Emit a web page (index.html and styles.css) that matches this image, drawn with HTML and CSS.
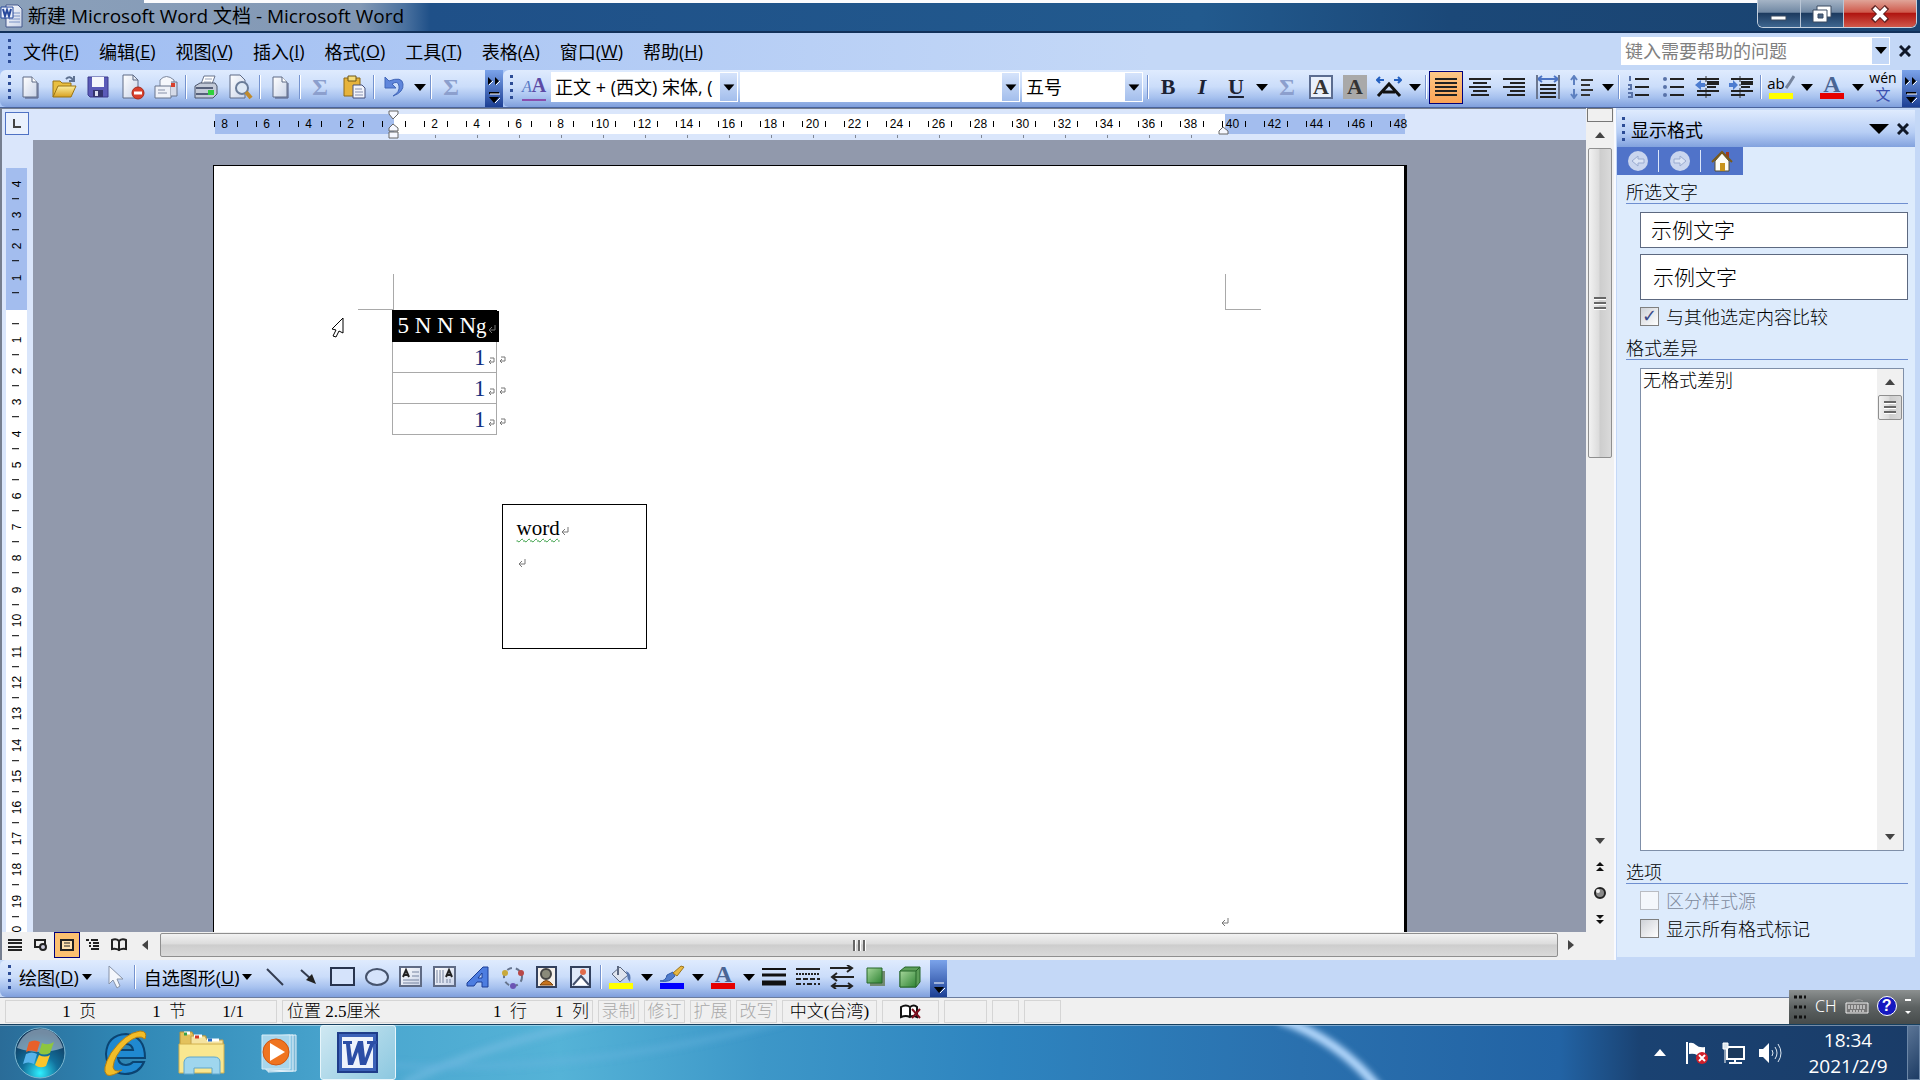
FILE: index.html
```html
<!DOCTYPE html>
<html lang="zh-CN">
<head>
    <meta charset="UTF-8">
    <meta name="viewport" content="width=device-width, initial-scale=1.0">
    <title>新建 Microsoft Word 文档 - Microsoft Word</title>
    <link rel="stylesheet" href="styles.css">
</head>
<body>
    <!-- shared icons -->
    <svg class="defs" aria-hidden="true">
        <defs>
            <linearGradient id="paper" x1="0" y1="0" x2="1" y2="1"><stop offset="0" stop-color="#ffffff"/><stop offset="1" stop-color="#c9d3e8"/></linearGradient>
            <linearGradient id="green" x1="0" y1="0" x2="1" y2="1"><stop offset="0" stop-color="#a5d69a"/><stop offset="1" stop-color="#2f8434"/></linearGradient>
            <linearGradient id="gold" x1="0" y1="0" x2="0" y2="1"><stop offset="0" stop-color="#fdf0a0"/><stop offset="1" stop-color="#d8a020"/></linearGradient>
            <symbol id="down" viewBox="0 0 12 7"><path d="M0 0h12L6 7z" fill="#000"/></symbol>
            <symbol id="page" viewBox="0 0 24 24"><path d="M5 2h9l5 5v15H5z" fill="url(#paper)" stroke="#5f6b85"/><path d="M14 2v5h5" fill="#fff" stroke="#5f6b85"/><path d="M20 8v15H7" fill="none" stroke="#50597a"/></symbol>
            <symbol id="ret" viewBox="0 0 8 8"><path d="M7 0v5H2M4 2L1 5l3 3" fill="none" stroke="currentColor"/></symbol>
            <symbol id="cellmark" viewBox="0 0 8 8"><path d="M3 1h4v4H2M4 3L2 5l2 2" fill="none" stroke="currentColor"/></symbol>
            <symbol id="more" viewBox="0 0 18 38"><path d="M3 7l4 4-4 4zM10 7l4 4-4 4z" fill="#000"/><path d="M4 15l4-4M11 15l4-4" stroke="#fff"/><path d="M4 23h10" stroke="#000" stroke-width="2"/><path d="M5 24h10" stroke="#fff"/><path d="M4 27h10l-5 6z" fill="#000"/><path d="M10 33l5-5" stroke="#fff"/></symbol>
            <symbol id="x" viewBox="0 0 12 12"><path d="M1 1l10 10M11 1L1 11" stroke="#101828" stroke-width="3"/></symbol>
        </defs>
    </svg>

    <header class="titlebar">
        <svg class="app-icon" viewBox="0 0 24 24"><path d="M6 1h12l4 4v18H6z" fill="url(#paper)" stroke="#44598c"/><path d="M12 9h8M12 12h8M9 15h11M9 18h11" stroke="#7b92c4"/><path d="M1 3h12v11H1z" fill="#e9effb" stroke="#27489b"/><path d="M3 5l2 7 2-6 2 6 2-7" fill="none" stroke="#27489b" stroke-width="2"/></svg>
        <h1 class="title">新建 Microsoft Word 文档 - Microsoft Word</h1>
        <div class="window-buttons">
            <button class="win" aria-label="最小化"><svg width="18" height="16"><path d="M1 10h15v4H1z" fill="#fff" stroke="#3b4a60"/></svg></button>
            <button class="win" aria-label="还原"><svg width="20" height="18"><path d="M5 1h14v11H5z" fill="#fff" stroke="#3b4a60"/><path d="M1 5h14v12H1z" fill="#fff" stroke="#3b4a60"/><path d="M6 9h5v4H6z" fill="#4c6584" stroke="#3b4a60"/></svg></button>
            <button class="win close" aria-label="关闭"><svg width="20" height="18"><path d="M3 2l14 14M17 2L3 16" stroke="#5a2020" stroke-width="6"/><path d="M4 3l12 12M16 3L4 15" stroke="#fff" stroke-width="4"/></svg></button>
        </div>
    </header>

    <nav class="menubar">
        <span class="grip"></span>
        <button class="menu">文件(<u>F</u>)</button>
        <button class="menu">编辑(<u>E</u>)</button>
        <button class="menu">视图(<u>V</u>)</button>
        <button class="menu">插入(<u>I</u>)</button>
        <button class="menu">格式(<u>O</u>)</button>
        <button class="menu">工具(<u>T</u>)</button>
        <button class="menu">表格(<u>A</u>)</button>
        <button class="menu">窗口(<u>W</u>)</button>
        <button class="menu">帮助(<u>H</u>)</button>
        <div class="ask">
            <input type="text" class="ask-input" aria-label="帮助" placeholder="键入需要帮助的问题">
            <button class="ask-arrow" aria-label="展开"><svg width="12" height="7"><use href="#down"/></svg></button>
        </div>
        <button class="doc-close" aria-label="关闭窗口"><svg width="12" height="12"><use href="#x"/></svg></button>
    </nav>

    <div class="toolbars">
        <div class="toolbar standard">
            <span class="grip"></span>
            <button class="tool" aria-label="新建"><svg width="24" height="26"><use href="#page"/></svg></button>
            <button class="tool" aria-label="打开"><svg width="26" height="26" viewBox="0 0 26 26"><path d="M2 23V7h7l2 2h9v4" fill="#e9bf3f" stroke="#9a7414"/><path d="M2 23l5-11h18l-5 11z" fill="url(#gold)" stroke="#9a7414"/><path d="M15 5q4-4 7 1M23 2v5h-5" fill="none" stroke="#5e7190" stroke-width="2"/></svg></button>
            <button class="tool" aria-label="保存"><svg width="24" height="24"><path d="M2 2h20v20H4l-2-2z" fill="#5b5bb8" stroke="#3a3a8c"/><path d="M6 2h12v10H6z" fill="#f4f6fc"/><path d="M7 15h10v7H7z" fill="#35356e"/><path d="M9 16h3v5H9z" fill="#dfe3f2"/></svg></button>
            <button class="tool" aria-label="权限"><svg width="26" height="26"><path d="M4 1h10l5 5v18H4z" fill="url(#paper)" stroke="#5f6b85"/><path d="M14 1v5h5" fill="none" stroke="#5f6b85"/><circle cx="19" cy="19" r="6" fill="#d8402c" stroke="#a82a1a"/><path d="M15 19h8" stroke="#fff" stroke-width="3"/></svg></button>
            <button class="tool" aria-label="电子邮件"><svg width="26" height="26"><path d="M7 12V6q6-7 14 0v10" fill="#f5f7fc" stroke="#7b869c"/><path d="M2 12h16v12H2z" fill="#eef1f8" stroke="#69748c"/><path d="M18 8h6v14h-6" fill="#d5dbe8" stroke="#69748c"/><path d="M5 16h7M5 19h9" stroke="#8690a8"/><path d="M18 9h4v4h-4z" fill="#d8402c"/></svg></button>
            <span class="sep"></span>
            <button class="tool" aria-label="打印"><svg width="26" height="26"><path d="M8 10l3-8h11l-3 8z" fill="#fff" stroke="#69748c"/><path d="M12 5h7M11 8h7" stroke="#9aa5bb"/><path d="M2 12l5-3h15l2 3v8l-4 4H2z" fill="#c3cad8" stroke="#4b556b"/><path d="M3 14h17M3 20h17" stroke="#56607a" stroke-width="2"/><path d="M15 16h6v5h-6z" fill="#2fd03c"/></svg></button>
            <button class="tool" aria-label="打印预览"><svg width="26" height="26"><path d="M3 1h10l5 5v18H3z" fill="url(#paper)" stroke="#5f6b85"/><circle cx="15" cy="14" r="6" fill="#dfe9f5" stroke="#6a7c98" stroke-width="2"/><path d="M19 18l5 6" stroke="#c08a2c" stroke-width="4"/></svg></button>
            <span class="sep"></span>
            <button class="tool" aria-label="空白文档"><svg width="24" height="26"><use href="#page"/></svg></button>
            <span class="sep"></span>
            <button class="tool sigma" aria-label="求和" disabled>Σ</button>
            <button class="tool" aria-label="粘贴"><svg width="26" height="26"><path d="M3 4h16v18H3z" fill="#e6b33c" stroke="#8c6817"/><path d="M7 2h8v5H7z" fill="#f5dc78" stroke="#6c5518"/><path d="M12 11h9l3 3v10H12z" fill="#f2f4fb" stroke="#47507a"/><path d="M14 15h7M14 18h8M14 21h8" stroke="#8690b0"/></svg></button>
            <span class="sep"></span>
            <button class="tool" aria-label="撤消"><svg width="24" height="24"><path d="M3 2v11h11l-4-4q6-4 7 2t-6 10q11-4 10-12T7 6z" fill="#5f86dc" stroke="#4166b8"/></svg></button>
            <button class="drop" aria-label="撤消列表"><svg width="12" height="7"><use href="#down"/></svg></button>
            <span class="sep"></span>
            <button class="tool sigma" aria-label="公式" disabled>Σ</button>
            <button class="more" aria-label="工具栏选项"><svg width="18" height="38"><use href="#more"/></svg></button>
        </div>
        <div class="toolbar formatting">
            <span class="grip"></span>
            <button class="tool" aria-label="样式和格式"><span class="aa"><i>A</i><b>A</b></span></button>
            <div class="combo style-combo">
                <select aria-label="样式"><option>正文 + (西文) 宋体, (</option></select>
                <svg class="combo-arrow" viewBox="0 0 17 30"><use href="#down" x="3" y="12" width="12" height="7"/></svg>
            </div>
            <div class="combo font-combo">
                <select aria-label="字体"><option></option></select>
                <svg class="combo-arrow" viewBox="0 0 17 30"><use href="#down" x="3" y="12" width="12" height="7"/></svg>
            </div>
            <div class="combo size-combo">
                <select aria-label="字号"><option>五号</option></select>
                <svg class="combo-arrow" viewBox="0 0 17 30"><use href="#down" x="3" y="12" width="12" height="7"/></svg>
            </div>
            <span class="sep"></span>
            <button class="tool letter"><b>B</b></button>
            <button class="tool letter"><i>I</i></button>
            <button class="tool letter"><u>U</u></button>
            <button class="drop" aria-label="下划线列表"><svg width="12" height="7"><use href="#down"/></svg></button>
            <button class="tool sigma" aria-label="公式" disabled>Σ</button>
            <button class="tool"><span class="letter-box">A</span></button>
            <button class="tool"><span class="letter-box shade">A</span></button>
            <button class="tool" aria-label="字符缩放"><svg width="26" height="24"><path d="M1 5h7M4 2L1 5l3 3M18 5h7M22 2l3 3-3 3" fill="none" stroke="#2460c0" stroke-width="2"/><path d="M2 21l11-12 11 12M7 17h12" fill="none" stroke="#111" stroke-width="3"/></svg></button>
            <button class="drop" aria-label="缩放列表"><svg width="12" height="7"><use href="#down"/></svg></button>
            <span class="sep"></span>
            <button class="tool pressed" aria-label="两端对齐"><svg width="22" height="20"><path d="M0 2h22M0 6h22M0 10h22M0 14h22M0 18h22" stroke="#222" stroke-width="2"/></svg></button>
            <button class="tool" aria-label="居中"><svg width="22" height="20"><path d="M0 2h22M4 6h14M0 10h22M4 14h14M2 18h18" stroke="#222" stroke-width="2"/></svg></button>
            <button class="tool" aria-label="右对齐"><svg width="22" height="20"><path d="M0 2h22M7 6h15M0 10h22M7 14h15M4 18h18" stroke="#222" stroke-width="2"/></svg></button>
            <button class="tool" aria-label="分散对齐"><svg width="24" height="24"><path d="M2 4h20M6 1L2 4l4 3M18 1l4 3-4 3" fill="none" stroke="#4c74c4" stroke-width="2"/><path d="M1 0v24M23 0v24" stroke="#6b7790" stroke-width="2"/><path d="M4 10h16M4 14h16M4 18h16M4 22h16" stroke="#222" stroke-width="2"/></svg></button>
            <button class="tool" aria-label="行距"><svg width="24" height="24"><path d="M4 1v9M1 5l3-4 3 4M4 14v9M1 19l3 4 3-4" fill="none" stroke="#5d80c0" stroke-width="2"/><path d="M11 5h12M11 10h9M11 15h12M11 20h9" stroke="#333" stroke-width="2"/></svg></button>
            <button class="drop" aria-label="行距列表"><svg width="12" height="7"><use href="#down"/></svg></button>
            <span class="sep"></span>
            <button class="tool" aria-label="编号"><svg width="24" height="22"><path d="M3 0v5M1 9h3v4M1 13h4M1 17h4v4H1" fill="none" stroke="#5872a8" stroke-width="2"/><path d="M8 3h14M8 11h14M8 19h14" stroke="#222" stroke-width="2"/></svg></button>
            <button class="tool" aria-label="项目符号"><svg width="24" height="22"><g fill="#5872a8"><circle cx="4" cy="3" r="2"/><circle cx="4" cy="11" r="2"/><circle cx="4" cy="19" r="2"/></g><path d="M9 3h14M9 11h14M9 19h14" stroke="#222" stroke-width="2"/></svg></button>
            <button class="tool" aria-label="减少缩进"><svg width="24" height="22"><path d="M2 3h22M12 7h12M12 11h9M2 15h22M2 19h14" stroke="#222" stroke-width="2"/><path d="M12 5h12v4H12z" fill="#222"/><path d="M0 9l6-5v3h4v4H6v3z" fill="#4c7cd0"/><path d="M11 0v22" stroke="#333" stroke-dasharray="2 2"/></svg></button>
            <button class="tool" aria-label="增加缩进"><svg width="24" height="22"><path d="M2 3h22M12 11h9M2 15h22M2 19h14" stroke="#222" stroke-width="2"/><path d="M12 5h12v4H12z" fill="#222"/><path d="M9 9L4 4v3H0v4h4v3z" fill="#4c7cd0"/><path d="M11 0v22" stroke="#333" stroke-dasharray="2 2"/></svg></button>
            <span class="sep"></span>
            <button class="tool color-tool" aria-label="突出显示"><span class="ab">ab<svg width="10" height="14"><path d="M9 1L4 9l-3 4" stroke="#75839c" stroke-width="3"/></svg></span><span class="swatch yellow"></span></button>
            <button class="drop" aria-label="突出显示列表"><svg width="12" height="7"><use href="#down"/></svg></button>
            <button class="tool color-tool" aria-label="字体颜色"><span class="color-letter">A</span><span class="swatch red"></span></button>
            <button class="drop" aria-label="字体颜色列表"><svg width="12" height="7"><use href="#down"/></svg></button>
            <button class="tool color-tool" aria-label="拼音指南"><span class="pinyin">wén</span><span class="hanzi">文</span></button>
            <button class="more" aria-label="工具栏选项"><svg width="18" height="38"><use href="#more"/></svg></button>
        </div>
    </div>

    <main class="main">
        <section class="document">
            <div class="hruler">
                <div class="corner"><span class="tab-box"><svg width="8" height="9"><path d="M1 0v8h7" fill="none" stroke="#444" stroke-width="2"/></svg></span></div>
                <div class="hscale">
                    <div class="hcells">
                        <span>8</span><span>6</span><span>4</span><span>2</span><span></span><span>2</span><span>4</span><span>6</span><span>8</span><span>10</span><span>12</span><span>14</span><span>16</span><span>18</span><span>20</span><span>22</span><span>24</span><span>26</span><span>28</span><span>30</span><span>32</span><span>34</span><span>36</span><span>38</span><span>40</span><span>42</span><span>44</span><span>46</span><span>48</span>
                    </div>
                    <svg class="indent left" width="12" height="29"><g fill="#f6f8ff" stroke="#666"><path d="M1 1h9v3L5 9 1 4z"/><path d="M1 21v-3l4-4 5 4v3z"/><path d="M1 22h9v6H1z"/></g></svg>
                    <svg class="indent right" width="12" height="9"><path d="M1 8V5l4-4 5 4v3z" fill="#f6f8ff" stroke="#666"/></svg>
                </div>
            </div>
            <div class="work">
                <div class="vruler">
                    <div class="vcells">
                        <span>4</span><span>3</span><span>2</span><span>1</span><span></span><span>1</span><span>2</span><span>3</span><span>4</span><span>5</span><span>6</span><span>7</span><span>8</span><span>9</span><span>10</span><span>11</span><span>12</span><span>13</span><span>14</span><span>15</span><span>16</span><span>17</span><span>18</span><span>19</span><span>20</span>
                    </div>
                </div>
                <div class="desk">
                    <article class="sheet">
                        <div class="margins"><span class="crop crop-left"></span><span class="crop crop-right"></span></div>
                        <table class="doc-table">
                            <tr class="selected"><td>5 N N N<small>g</small><svg class="mark" width="8" height="8"><use href="#ret"/></svg></td><td></td></tr>
                            <tr><td>1<svg class="mark" width="8" height="8"><use href="#cellmark"/></svg></td><td class="row-end"><svg class="mark" width="8" height="8"><use href="#cellmark"/></svg></td></tr>
                            <tr><td>1<svg class="mark" width="8" height="8"><use href="#cellmark"/></svg></td><td class="row-end"><svg class="mark" width="8" height="8"><use href="#cellmark"/></svg></td></tr>
                            <tr><td>1<svg class="mark" width="8" height="8"><use href="#cellmark"/></svg></td><td class="row-end"><svg class="mark" width="8" height="8"><use href="#cellmark"/></svg></td></tr>
                        </table>
                        <div class="textbox">
                            <p><span class="grammar">word</span><svg class="mark" width="8" height="8"><use href="#ret"/></svg></p>
                            <p><svg class="mark" width="8" height="8"><use href="#ret"/></svg></p>
                        </div>
                        <svg class="mark end-mark" width="8" height="8"><use href="#ret"/></svg>
                        <svg class="pointer" width="14" height="22"><path d="M12 1L1 12l4 1-3 6 3 1 3-6 4 2z" fill="#fff" stroke="#000"/></svg>
                    </article>
                </div>
            </div>
            <div class="hscroll">
                <button class="view" aria-label="普通视图"><svg width="14" height="12"><path d="M0 1h14M0 4h14M0 8h14M0 11h14" stroke="#222" stroke-width="2"/></svg></button>
                <button class="view" aria-label="Web 版式"><svg width="14" height="12"><path d="M1 1h10v7H1z" fill="none" stroke="#222" stroke-width="2"/><circle cx="9" cy="8" r="3" fill="#ccd" stroke="#222" stroke-width="2"/></svg></button>
                <button class="view pressed" aria-label="页面视图"><svg width="14" height="12"><path d="M1 1h12v10H1z" fill="#ffe2b0" stroke="#222" stroke-width="2"/><path d="M4 4h6M4 7h6" stroke="#222"/></svg></button>
                <button class="view" aria-label="大纲视图"><svg width="14" height="12"><path d="M0 1h3M5 1h7M3 4h2M7 4h6M3 7h2M7 7h6M5 10h8" stroke="#222" stroke-width="2"/></svg></button>
                <button class="view" aria-label="阅读版式"><svg width="16" height="14"><path d="M1 2q4-2 7 1 3-3 7-1v9q-4-1-7 1-3-2-7-1zM8 3v10" fill="none" stroke="#222" stroke-width="2"/></svg></button>
                <button class="scroll-btn" aria-label="向左"><svg width="6" height="10"><path d="M6 0v10L0 5z" fill="#444"/></svg></button>
                <div class="hthumb"><span></span><span></span><span></span></div>
                <button class="scroll-btn" aria-label="向右"><svg width="6" height="10"><path d="M0 0v10l6-5z" fill="#444"/></svg></button>
            </div>
        </section>

        <div class="vscroll">
            <span class="splitter"></span>
            <button class="scroll-btn" aria-label="向上"><svg width="10" height="6"><path d="M0 6h10L5 0z" fill="#444"/></svg></button>
            <div class="vthumb"><span></span><span></span><span></span></div>
            <div class="track"></div>
            <button class="scroll-btn" aria-label="向下"><svg width="10" height="6"><path d="M0 0h10L5 6z" fill="#444"/></svg></button>
            <button class="scroll-btn" aria-label="前一页"><svg width="8" height="10"><path d="M0 4h8L4 0zM0 9h8L4 5z" fill="#111"/></svg></button>
            <button class="scroll-btn" aria-label="选择浏览对象"><svg width="12" height="12"><circle cx="6" cy="6" r="5" fill="#888" stroke="#222" stroke-width="2"/><circle cx="4" cy="4" r="2" fill="#eee"/></svg></button>
            <button class="scroll-btn" aria-label="下一页"><svg width="8" height="10"><path d="M0 1h8L4 5zM0 6h8l-4 4z" fill="#111"/></svg></button>
        </div>

        <aside class="pane">
            <div class="pane-head">
                <span class="grip"></span>
                <h2 class="pane-title">显示格式</h2>
                <button class="pane-btn" aria-label="其他任务窗格"><svg width="20" height="10" viewBox="0 0 20 10"><path d="M0 0h20L10 10z"/></svg></button>
                <button class="pane-btn" aria-label="关闭窗格"><svg width="12" height="12"><use href="#x"/></svg></button>
            </div>
            <div class="pane-nav">
                <button class="nav" aria-label="返回"><svg width="22" height="22"><circle cx="11" cy="11" r="10" fill="#c9d5ee"/><path d="M5 11l6-5v3h6v4h-6v3z" fill="#dbe4f5" stroke="#9aabd0"/></svg></button>
                <button class="nav" aria-label="前进"><svg width="22" height="22"><circle cx="11" cy="11" r="10" fill="#c9d5ee"/><path d="M17 11l-6-5v3H5v4h6v3z" fill="#dbe4f5" stroke="#9aabd0"/></svg></button>
                <button class="nav" aria-label="主页"><svg width="22" height="22"><path d="M15 2h3v6h-3z" fill="#a03a20"/><path d="M4 11l7-8 7 8v10H4z" fill="#fdfdf6" stroke="#5a5030"/><path d="M1 12L11 2l10 10" fill="none" stroke="#7a5a18" stroke-width="2"/><path d="M9 13h5v8H9z" fill="#c8941c"/></svg></button>
            </div>
            <div class="pane-body">
                <h3 class="pane-label">所选文字</h3>
                <button class="sample">示例文字</button>
                <button class="sample second">示例文字</button>
                <div class="check">
                    <input type="checkbox" id="compare" checked>
                    <label for="compare">与其他选定内容比较</label>
                </div>
                <h3 class="pane-label">格式差异</h3>
                <div class="diff">
                    <p class="diff-text">无格式差别</p>
                    <div class="diff-scroll">
                        <button class="scroll-btn" aria-label="向上"><svg width="10" height="6"><path d="M0 6h10L5 0z" fill="#444"/></svg></button>
                        <div class="vthumb small"><span></span><span></span><span></span></div>
                        <div class="track"></div>
                        <button class="scroll-btn" aria-label="向下"><svg width="10" height="6"><path d="M0 0h10L5 6z" fill="#444"/></svg></button>
                    </div>
                </div>
                <h3 class="pane-label">选项</h3>
                <div class="check disabled">
                    <input type="checkbox" id="source" disabled>
                    <label for="source">区分样式源</label>
                </div>
                <div class="check">
                    <input type="checkbox" id="marks">
                    <label for="marks">显示所有格式标记</label>
                </div>
            </div>
        </aside>
    </main>

    <div class="drawbar">
        <div class="toolbar drawing">
            <span class="grip"></span>
            <button class="text-tool">绘图(<u>D</u>)<svg width="10" height="6"><use href="#down"/></svg></button>
            <button class="tool" aria-label="选择对象"><svg width="18" height="24"><path d="M3 1v18l4-4 4 8 3-2-3-7h6z" fill="#f4f7fc" stroke="#8793a8"/></svg></button>
            <span class="sep"></span>
            <button class="text-tool">自选图形(<u>U</u>)<svg width="10" height="6"><use href="#down"/></svg></button>
            <button class="tool" aria-label="直线"><svg width="20" height="20"><path d="M2 2l16 16" stroke="#333c50" stroke-width="2"/></svg></button>
            <button class="tool" aria-label="箭头"><svg width="20" height="20"><path d="M2 3l10 9" stroke="#333c50" stroke-width="2"/><path d="M17 17L7 13l6-6z" fill="#222"/></svg></button>
            <button class="tool" aria-label="矩形"><svg width="26" height="20"><path d="M1 1h23v17H1z" fill="#d5e3fb" stroke="#28344e" stroke-width="2"/></svg></button>
            <button class="tool" aria-label="椭圆"><svg width="26" height="20"><ellipse cx="13" cy="10" rx="11" ry="8" fill="#d5e3fb" stroke="#46536c" stroke-width="2"/></svg></button>
            <button class="tool" aria-label="文本框"><svg width="24" height="22"><path d="M1 1h21v19H1z" fill="url(#paper)" stroke="#5f6b85" stroke-width="2"/><path d="M4 11l3-7 3 7M5 9h4" fill="none" stroke="#222" stroke-width="2"/><path d="M13 6h7M13 10h7M4 14h16M4 17h16" stroke="#7684a0"/></svg></button>
            <button class="tool" aria-label="竖排文本框"><svg width="24" height="22"><path d="M1 1h21v19H1z" fill="url(#paper)" stroke="#5f6b85" stroke-width="2"/><path d="M13 11l3-7 3 7M14 9h4" fill="none" stroke="#222" stroke-width="2"/><path d="M4 4v13M7 4v13M10 4v13M14 13v4M17 13v4" stroke="#7684a0"/></svg></button>
            <button class="tool" aria-label="艺术字"><svg width="26" height="24"><path d="M1 18L17 2h5v20h-6v-5h-5l-3 4H1zM12 13h4V8z" fill="#4d7de0" stroke="#1c3f96" fill-rule="evenodd"/></svg></button>
            <button class="tool" aria-label="组织结构图"><svg width="24" height="24"><circle cx="12" cy="12" r="9" fill="none" stroke="#66748c" stroke-width="2" stroke-dasharray="5 4"/><circle cx="4" cy="8" r="3" fill="#c8a93c"/><circle cx="20" cy="8" r="3" fill="#b84848"/><circle cx="12" cy="21" r="3" fill="#6b54b4"/></svg></button>
            <button class="tool" aria-label="剪贴画"><svg width="24" height="24"><path d="M2 2h19v20H2z" fill="#f5f0ea" stroke="#33415e" stroke-width="2"/><circle cx="11" cy="9" r="5" fill="#8a8a7a" stroke="#444" stroke-width="2"/><path d="M5 20q6-9 13 0z" fill="#c8741c" stroke="#7a430c"/></svg></button>
            <button class="tool" aria-label="图片"><svg width="24" height="24"><path d="M2 2h19v20H2z" fill="#dfe9fa" stroke="#33415e" stroke-width="2"/><circle cx="14" cy="7" r="3" fill="#e06a4a"/><path d="M4 20l8-9 8 9" fill="#fff" stroke="#44506c" stroke-width="2"/></svg></button>
            <span class="sep"></span>
            <button class="tool color-tool" aria-label="填充颜色"><svg width="26" height="18"><path d="M4 9l8-7 8 8-8 7z" fill="#dfe5ef" stroke="#5c6880"/><path d="M10 1v9" stroke="#5c6880" stroke-width="2"/><path d="M18 6q6 2 4 11-3-3-3-7z" fill="#5878b0"/></svg><span class="swatch yellow"></span></button>
            <button class="drop" aria-label="填充列表"><svg width="12" height="7"><use href="#down"/></svg></button>
            <button class="tool color-tool" aria-label="线条颜色"><svg width="26" height="18"><path d="M1 16q6 0 7-6l6-3 2 4q-5 7-15 5z" fill="#4f7ccc" stroke="#315aa8"/><path d="M14 8l8-7 3 1-7 9z" fill="#e9b840" stroke="#9a7420"/></svg><span class="swatch blue"></span></button>
            <button class="drop" aria-label="线条列表"><svg width="12" height="7"><use href="#down"/></svg></button>
            <button class="tool color-tool" aria-label="字体颜色"><span class="color-letter">A</span><span class="swatch red"></span></button>
            <button class="drop" aria-label="字体颜色列表"><svg width="12" height="7"><use href="#down"/></svg></button>
            <button class="tool" aria-label="线型"><svg width="24" height="18"><path d="M0 1h24" stroke="#111" stroke-width="2"/><path d="M0 7h24" stroke="#111" stroke-width="3"/><path d="M0 15h24" stroke="#111" stroke-width="5"/></svg></button>
            <button class="tool" aria-label="虚线线型"><svg width="24" height="18"><g stroke="#222" stroke-width="2"><path d="M0 1h24"/><path d="M0 6h24" stroke-dasharray="2 1"/><path d="M0 11h24" stroke-dasharray="5 2"/><path d="M0 16h24" stroke-dasharray="5 2 2 2"/></g></svg></button>
            <button class="tool" aria-label="箭头样式"><svg width="24" height="24"><path d="M0 3h22M17 0l5 3-5 4M2 12h22M7 8l-5 4 5 4M2 21h20M6 18l-4 3 4 3M18 18l4 3-4 3" fill="none" stroke="#222" stroke-width="2"/></svg></button>
            <button class="tool" aria-label="阴影样式"><svg width="22" height="22"><path d="M5 5h15v15H5z" fill="#738a73"/><path d="M2 2h15v15H2z" fill="url(#green)" stroke="#27672a"/></svg></button>
            <button class="tool" aria-label="三维效果样式"><svg width="24" height="24"><path d="M2 6l5-4h15v15l-4 5H2z" fill="#5c9e58" stroke="#27672a"/><path d="M2 6h16v16H2z" fill="url(#green)" stroke="#27672a"/><path d="M18 6l4-4" stroke="#27672a"/></svg></button>
            <button class="more" aria-label="工具栏选项"><svg width="18" height="38"><path d="M4 23h10" stroke="#fff" stroke-width="1"/><path d="M4 27h10l-5 6z"/><path d="M10 33l5-5" stroke="#fff"/></svg></button>
        </div>
    </div>

    <footer class="status">
        <div class="field pages"><span>1&nbsp; 页</span><span>1&nbsp; 节</span><span>1/1</span></div>
        <div class="field place"><span>位置 2.5厘米</span><span>1&nbsp; 行</span><span>1&nbsp; 列</span></div>
        <div class="field mode">录制</div>
        <div class="field mode">修订</div>
        <div class="field mode">扩展</div>
        <div class="field mode">改写</div>
        <div class="field lang">中文(台湾)</div>
        <div class="field spell"><svg width="22" height="16"><path d="M1 3q5-3 9 0 4-3 7 0v10q-4-2-7 0-4-2-9 0zM10 3v10" fill="#fff" stroke="#111" stroke-width="2"/><path d="M12 5l8 9M20 5l-8 9" stroke="#801020" stroke-width="2"/></svg></div>
        <div class="field empty"></div>
        <div class="field empty"></div>
        <div class="field empty"></div>
        <div class="langbar">
            <svg width="16" height="26"><path d="M3 4h12M3 14h12M3 24h12" stroke="#111" stroke-width="3" stroke-dasharray="3 2"/></svg>
            <span>CH</span>
            <svg width="24" height="16"><path d="M8 4q5-4 10-1" fill="none" stroke="#999"/><path d="M1 5h22v10H1z" fill="#777" stroke="#eee"/><path d="M3 8h18M3 10h18M5 13h14" stroke="#fff" stroke-dasharray="2 1"/></svg>
            <button class="help" aria-label="帮助">?</button>
            <svg width="6" height="20"><path d="M0 4h6" stroke="#fff" stroke-width="2"/><path d="M0 15h6l-3 3z" fill="#fff"/></svg>
        </div>
    </footer>

    <div class="taskbar">
        <!-- light streaks of the desktop showing through -->
        <svg class="streaks" width="1060" height="55" viewBox="0 0 1060 55" aria-hidden="true">
            <defs><filter id="soft"><feGaussianBlur stdDeviation="3"/></filter></defs>
            <g fill="none" filter="url(#soft)">
                <path d="M895-6q60 20 100 70" stroke="#b9dcff" stroke-width="9"/>
                <path d="M20 58Q100 20 220-6" stroke="#7cc0e6" stroke-width="8" opacity=".5"/>
                <path d="M0 40Q200 50 400-4" stroke="#6cb4e0" stroke-width="6" opacity=".4"/>
            </g>
        </svg>
        <button class="task start" aria-label="开始">
            <svg width="54" height="54" viewBox="0 0 54 54">
                <defs><radialGradient id="orb" cx="50%" cy="90%" r="80%"><stop offset="0" stop-color="#2ff0ff"/><stop offset=".45" stop-color="#12709c"/><stop offset="1" stop-color="#0f3358"/></radialGradient></defs>
                <circle cx="27" cy="27" r="25" fill="url(#orb)" stroke="#7cb6cf"/>
                <path d="M4 22Q10 4 27 3t23 19q-23 8-46 0z" fill="#d5e4ee" opacity=".5"/>
                <path d="M16 16q6-3 11 0l-3 10q-6-3-11 0z" fill="#e8602a"/>
                <path d="M29 17q6 3 12-1l-4 11q-6 3-11 0z" fill="#8ec63f"/>
                <path d="M13 28q6-3 11 0l-3 10q-6-3-11 0z" fill="#58b4ec"/>
                <path d="M26 29q6 3 11 0l-4 11q-6 3-11-1z" fill="#fbc52c"/>
            </svg>
        </button>
        <button class="task" aria-label="Internet Explorer">
            <svg width="54" height="50" viewBox="0 0 54 50">
                <path d="M47 30H20q1 7 8 7 4 0 7-3h11q-5 12-19 12Q9 45 8 26 9 7 28 6q19 2 19 24zM20 22h15q-1-6-7-6t-8 6z" fill="#2089d0" stroke="#0b4472" fill-rule="evenodd" stroke-width="2"/>
                <path d="M47 11q3-8-5-8Q27 5 13 25 3 42 9 47q5 2 15-5-8 3-9-3 1-11 13-23Q40 5 47 11z" fill="#f2bd28" stroke="#b57f10"/>
            </svg>
        </button>
        <button class="task" aria-label="资源管理器">
            <svg width="50" height="48" viewBox="0 0 50 48">
                <path d="M3 8V3h12l2 4h12v6h17v30H3z" fill="#e3c15c" stroke="#b89436"/>
                <path d="M14 7h14l2 4h16v6H14z" fill="#f5e3a0" stroke="#c2a04a"/>
                <path d="M17 7h8M7 4h6" stroke="#fff" stroke-width="3"/><path d="M18 8h4" stroke="#d23a2a" stroke-width="3"/><path d="M7 5h3" stroke="#3aa04a" stroke-width="3"/><path d="M30 11h12" stroke="#fff" stroke-width="3"/><path d="M31 11h4" stroke="#2a6cc8" stroke-width="3"/>
                <path d="M2 15h45v29H2z" fill="#f9e790" stroke="#d2b04c"/>
                <path d="M7 45V33q1-5 6-5h24q6 0 6 5v12h-8v-6H17v6z" fill="#9fd6ee" stroke="#5fa6cc"/>
            </svg>
        </button>
        <button class="task" aria-label="Windows Media Player">
            <svg width="38" height="42" viewBox="0 0 38 42">
                <path d="M8 4l28-1v36L8 40z" fill="#7db9d8" stroke="#e4f2fa"/>
                <path d="M6 4l27-1v36L6 38z" fill="#8cc7e4" stroke="#e4f2fa"/>
                <path d="M2 3h28v34H2z" fill="#a8d6ec" stroke="#d9eef8"/>
                <circle cx="16" cy="20" r="13" fill="#ef7420" stroke="#d2550e"/>
                <path d="M10 11v18l15-9z" fill="#fff"/>
            </svg>
        </button>
        <button class="task active" aria-label="Microsoft Word">
            <svg width="42" height="42" viewBox="0 0 42 42">
                <path d="M1 1h39v39H1z" fill="#3c62b8" stroke="#1e3c8a" stroke-width="2"/>
                <path d="M5 5h31v31H5z" fill="#eef3fc"/>
                <path d="M6 9h9v3h-2l2 14 6-17h5l2 17 5-14h-3V9h10v3h-3l-8 21h-6l-2-13-5 13h-5L9 12H6z" fill="#2c4ea6"/>
            </svg>
        </button>
        <div class="tray">
            <button class="tray-btn" aria-label="显示隐藏的图标"><svg width="12" height="7"><path d="M0 7h12L6 0z" fill="#fff"/></svg></button>
            <button class="tray-btn" aria-label="操作中心"><svg width="24" height="24"><path d="M2 1v22" stroke="#fff" stroke-width="2"/><path d="M4 2q4-1 7 2t9 2v9q-5 1-8-1t-8-1z" fill="#fff"/><circle cx="17" cy="17" r="6" fill="#cf1f2a"/><path d="M14 14l6 6M20 14l-6 6" stroke="#fff" stroke-width="2"/></svg></button>
            <button class="tray-btn" aria-label="网络"><svg width="26" height="24"><path d="M6 6h17v12H6z" fill="#1c3a5c" stroke="#fff" stroke-width="2"/><path d="M8 22h13M14 18v4" stroke="#fff" stroke-width="2"/><path d="M2 2h5v6H2zM4 8v14" fill="#dde6ee" stroke="#fff" stroke-width="1"/></svg></button>
            <button class="tray-btn" aria-label="音量"><svg width="26" height="24"><path d="M1 8h4l6-6v20l-6-6H1z" fill="#fff"/><path d="M14 9q2 3 0 6M17 6q4 6 0 12M20 3q6 9 0 18" fill="none" stroke="#dfe9f2"/></svg></button>
            <div class="clock"><span>18:34</span><span>2021/2/9</span></div>
        </div>
        <button class="show-desktop" aria-label="显示桌面"></button>
    </div>
</body>
</html>
```

FILE: styles.css
```css
* {
    margin: 0;
    padding: 0;
    box-sizing: border-box;
}

body {
    display: flex;
    flex-direction: column;
    height: 100vh;
    overflow: hidden;
    background: #c4d8f7;
    color: #000;
    font-family: "Open Sans", "Noto Sans CJK SC", sans-serif;
    font-size: 18px;
}

button,
input,
select {
    font: inherit;
    color: inherit;
}

button {
    display: flex;
    align-items: center;
    justify-content: center;
    background: none;
    border: none;
}

svg {
    flex: none;
}

.defs {
    position: absolute;
    width: 0;
    height: 0;
}

/* Title bar */
.titlebar {
    display: flex;
    align-items: center;
    height: 33px;
    flex: none;
    padding-right: 3px;
    border-bottom: 2px solid #12315a;
    background:
        linear-gradient(#fbfbfd, #fbfbfd) 144px 0 / calc(100% - 288px) 3px no-repeat,
        linear-gradient(90deg, #8ba0ba 0, #8298b5 360px, #4a719f 405px, #1f5088 430px, #225a8e 1200px, #1b4878 1450px, #1a4370 100%);
}

.app-icon {
    width: 24px;
    height: 24px;
}

.title {
    flex: 1;
    margin-left: 4px;
    font-size: 19px;
    line-height: 28px;
    font-weight: 400;
}

.window-buttons {
    display: flex;
    align-self: flex-start;
    height: 28px;
    border: 1px solid #c4d0de;
    border-top: none;
    border-radius: 0 0 6px 6px;
    overflow: hidden;
}

.win {
    width: 43px;
    border-right: 1px solid #b9c6d6;
    background: linear-gradient(#a5b4c6 0, #7189a4 45%, #1d3b60 50%, #3e668f 100%);
}

.win.close {
    width: 72px;
    border: none;
    background: linear-gradient(#e0a498 0, #cf5a4c 45%, #b01510 50%, #d0584a 100%);
}

/* Menu bar */
.menubar {
    display: flex;
    align-items: center;
    height: 37px;
    flex: none;
    padding: 0 8px 2px;
    background: linear-gradient(90deg, #9fbdf2, #c4d8f7 60%);
}

.grip {
    width: 3px;
    height: 24px;
    flex: none;
    background: repeating-linear-gradient(#2c4c96 0, #2c4c96 3px, transparent 3px, transparent 7px);
}

.menu {
    margin-left: 12px;
    margin-right: 8px;
    white-space: nowrap;
}

.ask {
    display: flex;
    width: 269px;
    height: 28px;
    margin-left: auto;
    background: #fff;
    border: 1px solid #fff;
}

.ask-input {
    flex: 1;
    min-width: 0;
    padding-left: 3px;
    border: none;
    background: #fff;
}

.ask-input::placeholder {
    color: #808080;
    opacity: 1;
}

.ask-arrow {
    width: 17px;
    background: #c4d8f7;
}

.doc-close {
    width: 22px;
    margin-left: 4px;
    margin-right: -4px;
}

/* Toolbars */
.toolbars {
    display: flex;
    height: 38px;
    flex: none;
    background: #a9c5f5;
    border-bottom: 1px solid #49639c;
}

.toolbar {
    display: flex;
    align-items: center;
    height: 37px;
    padding-left: 8px;
    padding-bottom: 3px;
    background: linear-gradient(#dfebfe 0, #cbddfa 45%, #a5c0ee 75%, #7f9fdc 100%);
    border-radius: 6px 0 0 6px;
}

.standard {
    width: 503px;
}

.formatting {
    flex: 1;
    min-width: 0;
    padding-left: 7px;
}

.toolbar .grip {
    margin-right: 2px;
}

.formatting .grip {
    margin-right: 4px;
}

.tool {
    width: 34px;
    height: 33px;
    flex: none;
}

.tool.pressed {
    border: 1px solid #00007b;
    background: linear-gradient(#fdc888, #fba355);
}

.drop {
    width: 17px;
    height: 33px;
    flex: none;
}

.sep {
    width: 6px;
    height: 24px;
    flex: none;
    background: linear-gradient(90deg, transparent 2px, #7593cf 2px, #7593cf 3px, #fff 3px, #fff 4px, transparent 4px);
}

.more {
    width: 18px;
    height: 37px;
    flex: none;
    align-self: flex-start;
    margin-left: auto;
    background: linear-gradient(#7ba3ea, #1c3f94);
}

.formatting .more {
    margin-left: 2px;
}

.sigma {
    font-family: "Liberation Serif", serif;
    font-size: 24px;
    font-weight: 700;
    color: #8c9fcd;
}

.aa {
    display: flex;
    align-items: baseline;
    font-family: "Liberation Serif", serif;
    font-size: 20px;
    line-height: 24px;
    color: #5c4ba6;
    border-bottom: 2px solid #8a4fae;
}

.aa i {
    font-size: 16px;
    color: #5577c4;
}

.combo {
    position: relative;
    height: 30px;
    flex: none;
    margin-right: 2px;
    background: #fff;
    border: 1px solid #fff;
}

.combo select {
    width: 100%;
    height: 28px;
    padding-left: 3px;
    appearance: none;
    border: none;
    background: transparent;
}

.combo-arrow {
    position: absolute;
    top: 0;
    right: 0;
    width: 17px;
    height: 28px;
    background: linear-gradient(#d5e3fb, #a3beec);
    pointer-events: none;
}

.style-combo {
    width: 187px;
}

.font-combo {
    flex: 1;
    min-width: 0;
}

.size-combo {
    width: 121px;
}

.letter {
    font-family: "Liberation Serif", serif;
    font-size: 22px;
    font-weight: 700;
    color: #1c2233;
}

.letter-box {
    width: 24px;
    height: 24px;
    border: 2px solid #5b6c90;
    background: #e8effb;
    font-family: "Liberation Serif", serif;
    font-size: 22px;
    line-height: 20px;
    font-weight: 700;
    color: #333;
}

.letter-box.shade {
    border-color: #a9a9a9;
    background: #a9a9a9;
}

.color-tool {
    flex-direction: column;
}

.color-letter {
    height: 18px;
    font-family: "Liberation Serif", serif;
    font-size: 24px;
    line-height: 18px;
    font-weight: 700;
    color: #4a6594;
}

.swatch {
    width: 24px;
    height: 6px;
}

.yellow {
    background: #ff0;
}

.red {
    background: #e60000;
}

.blue {
    background: #00f;
}

.ab {
    display: flex;
    height: 18px;
    font-size: 15px;
    line-height: 16px;
}

.pinyin {
    font-size: 14px;
    line-height: 14px;
}

.hanzi {
    font-size: 15px;
    line-height: 18px;
    color: #3b4fae;
}

/* Document area */
.main {
    display: flex;
    flex: 1;
    min-height: 0;
}

.document {
    display: flex;
    flex-direction: column;
    flex: 1;
    min-width: 0;
    border-top: 1px solid #767f90;
    border-left: 2px solid #767f90;
}

.hruler {
    display: flex;
    height: 31px;
    flex: none;
    background: #dae6fb;
}

.corner {
    width: 31px;
    padding: 3px;
}

.tab-box {
    display: flex;
    align-items: center;
    justify-content: center;
    width: 24px;
    height: 23px;
    border: 1px solid #4f72c4;
    background: #eaf1fd;
}

.hscale {
    position: relative;
    width: 1190px;
    height: 31px;
    margin: 0 auto;
    font-family: "Liberation Sans", sans-serif;
    font-size: 12px;
    line-height: 20px;
}

.hcells {
    display: flex;
    height: 31px;
    padding-top: 5px;
    background: linear-gradient(90deg, #a3bdee 179px, #fff 179px, #fff 1010px, #a3bdee 1010px) 0 5px / 100% 20px no-repeat;
}

.hcells span {
    position: relative;
    width: 42px;
    flex: none;
    text-align: center;
}

/* the first number sits half a cell from the left end */
.hcells span:first-child {
    margin-left: -11px;
}

.hcells span::before {
    content: "";
    position: absolute;
    left: 10px;
    top: 7px;
    width: 22px;
    height: 6px;
    border-left: 1px solid #000;
    border-right: 1px solid #000;
}

.hcells span:last-child::before {
    border-right: none;
}

/* default tab stops under the white part */
.hcells span:nth-child(n + 6):nth-child(-n + 24)::after {
    content: "";
    position: absolute;
    left: 21px;
    top: 21px;
    width: 1px;
    height: 3px;
    background: #7f8794;
}

.indent {
    position: absolute;
}

.indent.left {
    left: 173px;
    top: 1px;
}

.indent.right {
    left: 1003px;
    top: 17px;
}

.work {
    display: flex;
    flex: 1;
    min-height: 0;
}

.vruler {
    width: 31px;
    flex: none;
    padding: 28px 6px 0 4px;
    background: #dae6fb;
    overflow: hidden;
}

.vcells {
    display: flex;
    flex-direction: column;
    height: 780px;
    background: linear-gradient(#a3bdee 142px, #fff 142px);
    font-family: "Liberation Sans", sans-serif;
    font-size: 12px;
}

.vcells span {
    position: relative;
    display: flex;
    flex: 1;
    align-items: center;
    justify-content: center;
    writing-mode: vertical-rl;
    transform: rotate(180deg);
}

.vcells span::before {
    content: "";
    position: absolute;
    left: 8px;
    top: 0;
    width: 7px;
    height: 1px;
    background: #000;
}

.desk {
    flex: 1;
    min-width: 0;
    padding-top: 25px;
    background: #9199ac;
    overflow: hidden;
}

.sheet {
    position: relative;
    width: 1194px;
    height: 1500px;
    margin: 0 auto;
    background: #fff;
    border: 1px solid #000;
    border-right-width: 3px;
    font-family: "Liberation Serif", serif;
    font-size: 21px;
}

.margins {
    display: flex;
    justify-content: space-between;
    align-items: flex-end;
    height: 144px;
    padding: 0 143px 0 144px;
}

.crop {
    width: 36px;
    height: 36px;
    border-bottom: 1px solid #a9a9a9;
}

.crop-left {
    border-right: 1px solid #a9a9a9;
}

.crop-right {
    border-left: 1px solid #a9a9a9;
}

.doc-table {
    margin-left: 178px;
    border-collapse: collapse;
}

.doc-table td {
    width: 104px;
    height: 31px;
    padding-top: 1px;
    padding-right: 1px;
    border: 1px solid #a9a9a9;
    font-size: 23px;
    line-height: 24px;
    text-align: right;
    color: #103080;
    white-space: nowrap;
}

.doc-table td + td {
    width: 11px;
    padding: 0;
    border: none;
}

.doc-table .row-end {
    text-align: center;
}

.doc-table .selected td:first-child {
    padding: 0 0 0 5px;
    background: #000;
    border-color: #000;
    box-shadow: 3px 0 0 #000;
    color: #fff;
    text-align: left;
}

.doc-table small {
    font-size: 21px;
}

.mark {
    color: #777;
    margin-left: 1px;
}

.textbox {
    position: absolute;
    left: 288px;
    top: 338px;
    width: 145px;
    height: 145px;
    padding: 7px 14px;
    border: 1px solid #000;
}

.textbox p {
    line-height: 32px;
}

.grammar {
    text-decoration: underline wavy #2f9a3c 1px;
    text-underline-offset: 3px;
}

.end-mark {
    position: absolute;
    left: 1006px;
    top: 752px;
}

.pointer {
    position: absolute;
    left: 117px;
    top: 151px;
}

/* Scroll bars */
.hscroll {
    display: flex;
    align-items: center;
    height: 28px;
    flex: none;
    padding-bottom: 2px;
    background: #f0f0f0;
}

.view {
    width: 26px;
    height: 26px;
    flex: none;
}

.view.pressed {
    border: 1px solid #00007b;
    background: #fcc070;
}

.scroll-btn {
    width: 28px;
    height: 26px;
    flex: none;
}

.hscroll .scroll-btn {
    padding-right: 2px;
}

.hthumb {
    display: flex;
    align-items: center;
    justify-content: center;
    gap: 2px;
    flex: 1;
    height: 24px;
    border: 1px solid #8f8f8f;
    border-radius: 2px;
    background: linear-gradient(#f2f2f2, #dcdcdc 45%, #cdcdcd 50%, #dadada);
}

.hthumb span {
    width: 3px;
    height: 11px;
    border-left: 2px solid #666;
    background: #fff;
}

.vscroll {
    display: flex;
    flex-direction: column;
    align-items: center;
    width: 28px;
    flex: none;
    padding-bottom: 28px;
    background: #f0f0f0;
}

.splitter {
    width: 26px;
    height: 14px;
    flex: none;
    border: 1px solid #777;
    background: #f0f0f0;
}

.vthumb {
    display: flex;
    flex-direction: column;
    align-items: center;
    justify-content: center;
    gap: 2px;
    width: 24px;
    height: 310px;
    flex: none;
    border: 1px solid #8f8f8f;
    border-radius: 2px;
    background: linear-gradient(90deg, #f2f2f2, #dcdcdc 45%, #cdcdcd 50%, #dadada);
}

.vthumb.small {
    height: 25px;
}

.vthumb span {
    width: 12px;
    height: 3px;
    border-top: 2px solid #666;
    background: #fff;
}

.track {
    flex: 1;
}

/* Task pane */
.pane {
    display: flex;
    flex-direction: column;
    width: 306px;
    flex: none;
    padding: 2px 5px 3px 1px;
    background: #c4d8f7;
    border-left: 2px solid #f8faff;
}

.pane-head {
    display: flex;
    align-items: center;
    height: 37px;
    flex: none;
    padding-left: 5px;
    background: linear-gradient(#dfebfe, #b7cef5 60%, #82a2de);
}

.pane-title {
    flex: 1;
    margin-left: 6px;
    font-size: 18px;
    font-weight: 400;
}

.pane-btn {
    width: 24px;
    height: 30px;
}

.pane-nav {
    display: flex;
    align-items: center;
    height: 28px;
    flex: none;
    background: linear-gradient(90deg, #5073c9 126px, #ddebfc 126px);
}

.nav {
    width: 42px;
    height: 22px;
    border-right: 1px solid #dbe6fa;
}

.nav:last-child {
    border: none;
}

.pane-body {
    display: flex;
    flex-direction: column;
    flex: 1;
    min-height: 0;
    padding: 5px 7px 15px 9px;
    background: #ddebfc;
    font-weight: 300;
}

.pane-label {
    flex: none;
    padding-top: 2px;
    border-bottom: 1px solid #6f8fd0;
    font-size: 18px;
    line-height: 21px;
    font-weight: 300;
}

.sample {
    justify-content: flex-start;
    flex: none;
    height: 36px;
    margin: 8px 0 0 14px;
    padding: 0 0 2px 10px;
    background: #fff;
    border: 1px solid #5d6980;
    font-size: 21px;
}

.sample.second {
    height: 46px;
    margin-top: 6px;
    padding-left: 12px;
}

.check {
    display: flex;
    align-items: center;
    flex: none;
    height: 28px;
    margin: 2px 0 0 14px;
}

.check + .pane-label {
    margin-top: 6px;
}

.check + .check {
    margin-top: 0;
}

.check input {
    width: 19px;
    height: 19px;
    margin-right: 7px;
    appearance: none;
    border: 1px solid #7f7f7f;
    background: linear-gradient(135deg, #cfd2d8, #fff);
}

.check input:checked::after {
    content: "✓";
    display: block;
    font-family: "DejaVu Sans", sans-serif;
    font-size: 18px;
    line-height: 16px;
    font-weight: 700;
    text-align: center;
    color: #3c4a88;
}

.check input:disabled {
    border-color: #b9bcc2;
    background: #f4f7fb;
}

.check.disabled {
    color: #808a9c;
}

.diff {
    display: flex;
    flex: 1;
    min-height: 0;
    margin: 8px 4px 9px 14px;
    background: #fff;
    border: 1px solid #7f8fa8;
}

.diff-text {
    flex: 1;
    padding-left: 2px;
    line-height: 23px;
}

.diff-scroll {
    display: flex;
    flex-direction: column;
    align-items: center;
    width: 26px;
    background: #f0f0f0;
}

/* Drawing toolbar */
.drawbar {
    display: flex;
    height: 38px;
    flex: none;
    border-bottom: 1px solid #6b7d9f;
    background: #c4d8f7;
}

.drawing .more {
    width: 17px;
    margin-left: 3px;
}

.text-tool {
    padding: 0 6px;
    white-space: nowrap;
}

.text-tool svg {
    margin-left: 3px;
}

/* Status bar */
.status {
    position: relative;
    display: flex;
    gap: 5px;
    height: 26px;
    flex: none;
    padding: 2px 5px 1px;
    background: #f0f0f0;
    font-family: "Liberation Serif", "Noto Sans CJK SC", serif;
    font-size: 17px;
    font-weight: 300;
    line-height: 22px;
}

.field {
    display: flex;
    justify-content: center;
    border: 1px solid #d5d5d5;
    white-space: nowrap;
}

.pages {
    width: 272px;
    padding-right: 32px;
    justify-content: flex-end;
    gap: 56px;
}

.pages span:last-child {
    margin-left: -20px;
}

.place {
    width: 311px;
    justify-content: flex-start;
    gap: 28px;
    padding-left: 4px;
}

.place span:first-child {
    flex: 1;
}

.place span:last-child {
    padding-right: 3px;
}

.mode {
    width: 41px;
    color: #a8a8a8;
}

.lang {
    width: 95px;
}

.spell {
    width: 57px;
    align-items: center;
}

.empty {
    width: 43px;
}

.empty + .empty {
    width: 27px;
}

.empty + .empty + .empty {
    width: 37px;
}

/* floats over the right end of the status bar */
.langbar {
    position: absolute;
    right: 0;
    bottom: 0;
    display: flex;
    align-items: center;
    gap: 8px;
    width: 131px;
    height: 34px;
    padding: 0 0 2px 2px;
    background: linear-gradient(#8c9090, #5d6262 50%, #464b4b);
    color: #fff;
    font-family: "Noto Sans", sans-serif;
    font-size: 16px;
}

.help {
    width: 20px;
    height: 20px;
    flex: none;
    border: 1px solid #fff;
    border-radius: 50%;
    background: #1518c0;
    font-family: "Liberation Sans", sans-serif;
    font-size: 16px;
    font-weight: 700;
}

/* Taskbar */
.taskbar {
    position: relative;
    display: flex;
    align-items: center;
    height: 56px;
    flex: none;
    border-top: 1px solid #17405f;
    background: linear-gradient(90deg, #2a6c98 0, #2f86b4 120px, #4aa6cf 350px, #55b3d7 560px, #3d97c8 760px, #2e84bf 1000px, #2a70ae 1300px, #2263a4 1560px, #1a4272 1640px, #1a3c68 100%);
    box-shadow: inset 0 1px 0 rgba(255, 255, 255, 0.4);
}

.streaks {
    position: absolute;
    left: 20%;
    top: 0;
    overflow: hidden;
    pointer-events: none;
}

.task {
    position: relative;
    width: 77px;
    height: 55px;
    flex: none;
}

.start {
    width: 86px;
    padding-right: 6px;
}

.task.active {
    width: 76px;
    margin-left: 3px;
    border: 1px solid #e6f5fb;
    border-radius: 3px;
    background: linear-gradient(135deg, #cfe8f2, #8cc8e0);
}

.tray {
    display: flex;
    align-items: center;
    margin-left: auto;
}

.tray-btn {
    width: 37px;
    height: 40px;
}

.clock {
    display: flex;
    flex-direction: column;
    align-items: center;
    width: 118px;
    color: #fff;
    font-family: "Open Sans", sans-serif;
    font-size: 19px;
    line-height: 26px;
}

.show-desktop {
    width: 13px;
    height: 55px;
    border: 1px solid #6d88a8;
    background: linear-gradient(135deg, #5b7596, #1d3c64);
}
```
